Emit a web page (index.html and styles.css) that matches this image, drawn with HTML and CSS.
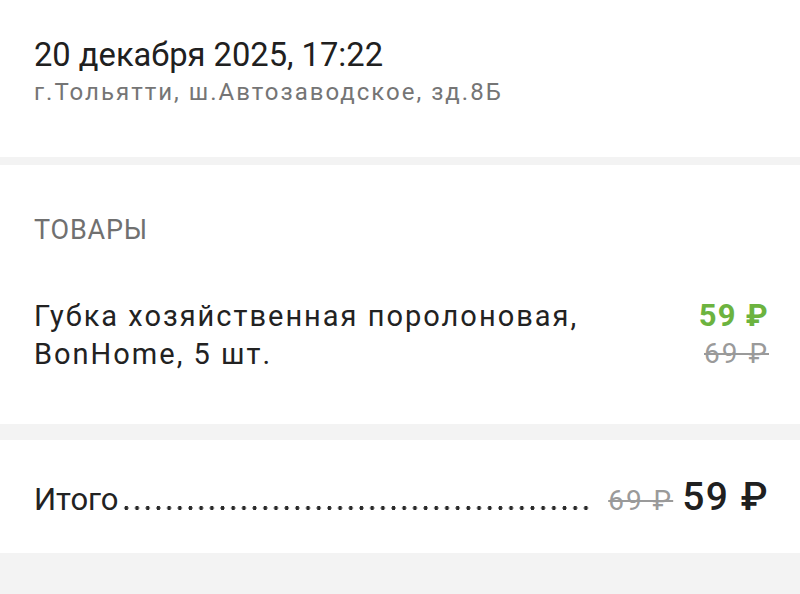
FILE: index.html
```html
<!DOCTYPE html>
<html lang="ru">
<head>
<meta charset="utf-8">
<link rel="stylesheet" href="styles.css">
</head>
<body>
<div class="page">
  <section class="card card-head">
    <div class="date">20 декабря 2025, 17:22</div>
    <div class="address">г.Тольятти, ш.Автозаводское, зд.8Б</div>
  </section>
  <section class="card card-items">
    <div class="section-title">ТОВАРЫ</div>
    <div class="item">
      <div class="item-name">Губка хозяйственная поролоновая,<br>BonHome, 5 шт.</div>
      <div class="item-prices">
        <div class="price-new">59 ₽</div>
        <div class="price-old">69 ₽</div>
      </div>
    </div>
  </section>
  <section class="card card-total">
    <div class="total-row">
      <span class="total-label">Итого</span>
      <span class="leader"></span>
      <span class="total-old">69 ₽</span>
      <span class="total-new">59 ₽</span>
    </div>
  </section>
</div>
</body>
</html>
```
FILE: styles.css
```css
html, body {
  margin: 0;
  padding: 0;
}
body {
  background: #f3f3f3;
  font-family: Roboto, "Noto Sans", "Liberation Sans", sans-serif;
  color: #212121;
}
.page {
  display: flex;
  flex-direction: column;
  width: 800px;
  height: 594px;
}
.card {
  background: #ffffff;
  padding: 0 31px 0 34px;
}
.card-head {
  height: 157px;
  padding-top: 35px;
  box-sizing: border-box;
}
.date {
  font-size: 32.7px;
  line-height: 41px;
  color: #202020;
}
.address {
  font-size: 24px;
  line-height: 32px;
  letter-spacing: 2px;
  color: #757575;
}
.card-items {
  margin-top: 8px;
  height: 259px;
  padding-top: 49px;
  box-sizing: border-box;
}
.section-title {
  font-size: 27px;
  line-height: 33px;
  letter-spacing: 0.8px;
  color: #707070;
}
.item {
  display: flex;
  justify-content: space-between;
  margin-top: 50px;
}
.item-name {
  font-size: 29px;
  line-height: 38px;
  letter-spacing: 2px;
  color: #222222;
}
.item-prices {
  display: flex;
  flex-direction: column;
  align-items: flex-end;
}
.price-new {
  font-size: 31px;
  line-height: 38px;
  font-weight: 700;
  letter-spacing: 1.3px;
  color: #6cb33f;
}
.price-old {
  font-size: 28px;
  line-height: 38px;
  letter-spacing: 2px;
  color: #9a9a9a;
  text-decoration: line-through;
}
.card-total {
  margin-top: 16px;
  height: 113px;
  box-sizing: border-box;
  display: flex;
  align-items: center;
}
.total-row {
  display: flex;
  align-items: baseline;
  width: 100%;
}
.total-label {
  font-size: 31px;
  color: #222222;
}
.leader {
  flex: 1;
  height: 4px;
  margin: 0 17px 0 3px;
  background-image: radial-gradient(circle at 50% 50%, #2a2a2a 1.8px, transparent 2.2px);
  background-size: 10.7px 4px;
  background-repeat: repeat-x;
  background-position: left bottom;
}
.total-old {
  font-size: 28px;
  letter-spacing: 2px;
  color: #9a9a9a;
  text-decoration: line-through;
}
.total-new {
  margin-left: 9px;
  font-size: 39px;
  font-weight: 500;
  letter-spacing: 1.5px;
  color: #202020;
}
```
